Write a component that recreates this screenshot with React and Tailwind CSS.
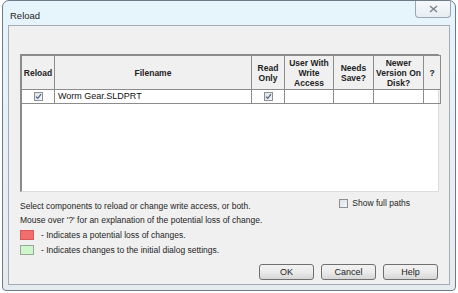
import React from 'react';

const font = { fontFamily: '"Liberation Sans", Arial, sans-serif' };

function Check({ checked }) {
  return (
    <span className="inline-flex items-center justify-center w-[9px] h-[9px] border border-[#8e8f8f] bg-gradient-to-br from-[#dde3ea] to-[#f4f6f8]">
      {checked && (
        <svg width="7" height="7" viewBox="0 0 7 7">
          <path d="M1 3.6 L2.8 5.4 L6 1.2" stroke="#4a5f80" strokeWidth="1.2" fill="none" />
        </svg>
      )}
    </span>
  );
}

function Button({ children }) {
  return (
    <button className="w-[55px] h-[16px] rounded-[3px] border border-[#707070] bg-gradient-to-b from-[#f2f2f2] via-[#ebebeb] to-[#d6d6d6] text-[9px] text-[#222] leading-none">
      {children}
    </button>
  );
}

export default function App() {
  const head = 'border border-[#8c8c8c] bg-[#f0f0f0] font-bold text-[8.5px] leading-[10px] text-[#222] text-center align-middle px-0';
  const cell = 'border border-[#8c8c8c] h-[14px] p-0 align-middle';

  return (
    <div className="w-[458px] h-[293px] bg-white" style={font}>
      <div className="ml-[2px] w-[454px] h-[291px] rounded-t-[7px] rounded-b-[4px] border border-[#6d7b89] bg-gradient-to-b from-[#e6f5fc] via-[#e8eff5] to-[#e6ebf0] flex flex-col px-[5px] pb-[5px]">
        {/* Title bar */}
        <div className="h-[24px] flex items-start justify-between shrink-0">
          <span className="pt-[8px] pl-[2px] text-[9.5px] text-[#1e1e1e]">Reload</span>
          <div className="w-[36px] h-[17px] -mr-[1px] rounded-b-[4px] border border-t-0 border-[#9aa6b2] bg-gradient-to-b from-[#f6f9fb] to-[#e6edf3] flex items-center justify-center">
            <svg width="9" height="8" viewBox="0 0 9 8">
              <path d="M1 1 L8 7 M8 1 L1 7" stroke="#7a848e" strokeWidth="1.5" />
            </svg>
          </div>
        </div>

        {/* Client */}
        <div className="flex-1 border border-[#a3adb7] bg-[#f0f0f0] pl-[11px] pt-[28px] flex flex-col">
          <div className="w-[419px] h-[138px] bg-white border-l-2 border-t-2 border-[#8a8a8a] border-r border-b border-r-[#dcdcdc] border-b-[#dcdcdc]">
            <table className="border-collapse table-fixed w-[419px] -ml-[1px] -mt-[1px]">
              <colgroup>
                <col className="w-[33px]" />
                <col className="w-[197px]" />
                <col className="w-[33px]" />
                <col className="w-[49px]" />
                <col className="w-[40px]" />
                <col className="w-[50px]" />
                <col className="w-[17px]" />
              </colgroup>
              <thead>
                <tr className="h-[34px]">
                  <th className={head}>Reload</th>
                  <th className={head}>Filename</th>
                  <th className={head}>Read<br />Only</th>
                  <th className={head}>User With<br />Write<br />Access</th>
                  <th className={head}>Needs<br />Save?</th>
                  <th className={head}>Newer<br />Version On<br />Disk?</th>
                  <th className={head}>?</th>
                </tr>
              </thead>
              <tbody>
                <tr>
                  <td className={cell + ' text-center'}><div className="flex justify-center"><Check checked /></div></td>
                  <td className={cell + ' pl-[3px] text-[9px] text-[#111] leading-none'}>Worm Gear.SLDPRT</td>
                  <td className={cell}><div className="flex justify-center"><Check checked /></div></td>
                  <td className={cell}></td>
                  <td className={cell}></td>
                  <td className={cell}></td>
                  <td className={cell}></td>
                </tr>
              </tbody>
            </table>
          </div>

          <div className="flex text-[8.5px] text-[#1e1e1e] mt-[5px]">
            <div className="flex flex-col">
              <div className="h-[14px] leading-[14px] mt-[2px]">Select components to reload or change write access, or both.</div>
              <div className="h-[14px] leading-[14px]">Mouse over '?' for an explanation of the potential loss of change.</div>
              <div className="flex items-center h-[10px] mt-[3px]">
                <span className="w-[14px] h-[10px] bg-[#f26e6e] border border-[#d85858]"></span>
                <span className="ml-[7px]">- Indicates a potential loss of changes.</span>
              </div>
              <div className="flex items-center h-[10px] mt-[5px]">
                <span className="w-[14px] h-[10px] bg-[#ccf8cc] border border-[#9aa69a]"></span>
                <span className="ml-[7px]">- Indicates changes to the initial dialog settings.</span>
              </div>
            </div>
            <div className="ml-[77px] flex items-center h-[10px] gap-[4px] mt-[1px]">
              <Check />
              <span>Show full paths</span>
            </div>
          </div>

          <div className="flex justify-end gap-[7px] pr-[11px] mt-[9px]">
            <Button>OK</Button>
            <Button>Cancel</Button>
            <Button>Help</Button>
          </div>
        </div>
      </div>
    </div>
  );
}
